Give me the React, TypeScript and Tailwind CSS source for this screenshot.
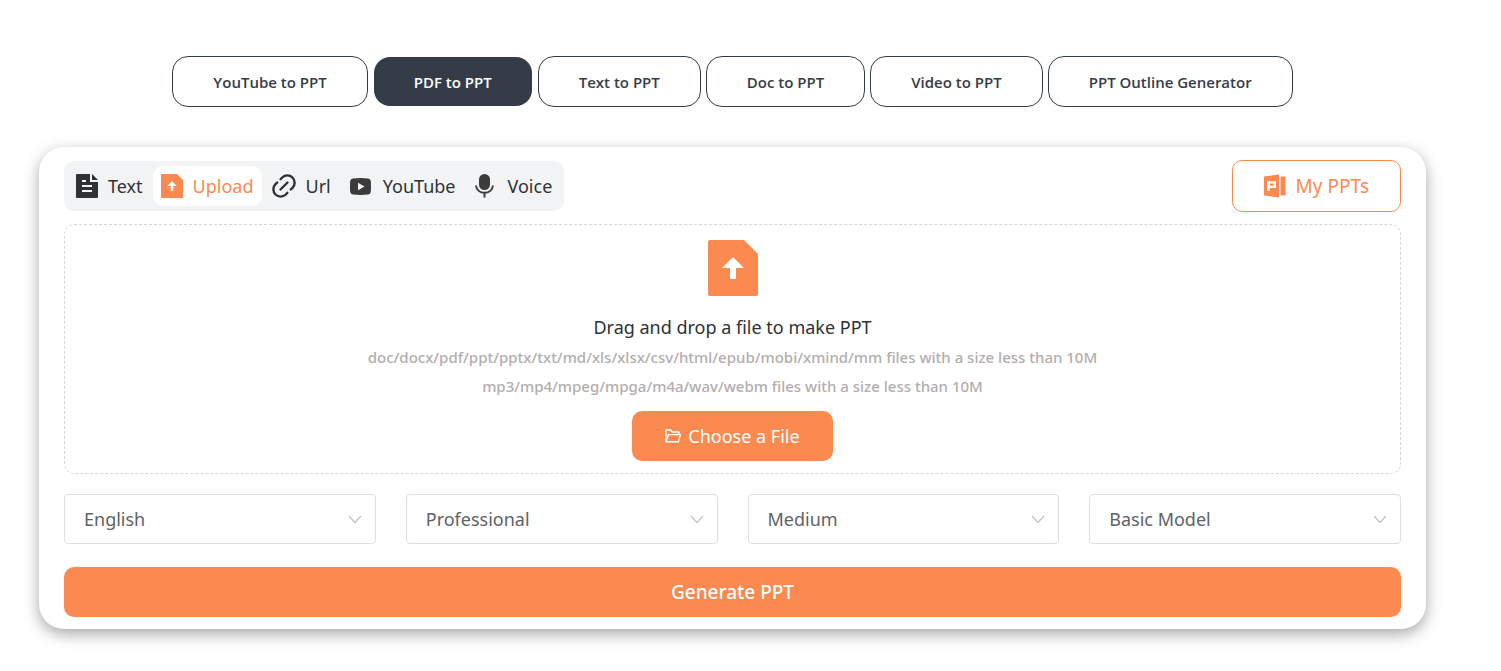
import React, { useState } from "react";
import clsx from "clsx";

const navItems = [
  "YouTube to PPT",
  "PDF to PPT",
  "Text to PPT",
  "Doc to PPT",
  "Video to PPT",
  "PPT Outline Generator",
];

const selects = [
  { label: "Language", options: ["English", "French", "Spanish"] },
  { label: "Tone", options: ["Professional", "Casual", "Creative"] },
  { label: "Length", options: ["Medium", "Short", "Long"] },
  { label: "Model", options: ["Basic Model", "Advanced Model"] },
];

const TextIcon = () => (
  <svg width="22" height="24" viewBox="0 0 22 24" aria-hidden="true">
    <path fill="#303133" d="M1 0h13v8h8v15a1 1 0 0 1-1 1H1a1 1 0 0 1-1-1V1a1 1 0 0 1 1-1z" />
    <path fill="#303133" d="M16 0l6 6h-6z" />
    <path stroke="#f2f3f5" strokeWidth="2" d="M6 7h4M6 12h10M6 17h10" />
  </svg>
);

const UploadIcon = ({ className }: { className: string }) => (
  <svg className={className} viewBox="0 0 50 56" preserveAspectRatio="none" aria-hidden="true">
    <path fill="#fb8a51" d="M2 0h34l14 14v40a2 2 0 0 1-2 2H2a2 2 0 0 1-2-2V2a2 2 0 0 1 2-2z" />
    <path fill="#fff" d="M25 17l11 11h-8v11h-6V28h-8z" />
  </svg>
);

const LinkIcon = () => (
  <svg width="24" height="24" viewBox="0 0 24 24" fill="none" stroke="#303133" strokeWidth="2.4" strokeLinecap="round" aria-hidden="true">
    <path d="M8.500 15.500l7-7" />
    <path d="M8.600 5.200l1.600-1.700a7 7 0 0 1 10.300 10.300l-1.700 1.600" />
    <path d="M5.200 8.600L3.500 10.200a7 7 0 0 0 10.300 10.300l1.600-1.700" />
  </svg>
);

const YouTubeIcon = () => (
  <svg width="24" height="17" viewBox="-1 0 24 17" aria-hidden="true">
    <path fill="#3b3b3b" d="M3 .4Q10.500-.4 18 .4q2.600.3 2.800 2.800.4 5.300 0 10.600-.2 2.500-2.800 2.800-7.500.8-15 0Q.4 16.300.2 13.800-.2 8.500.2 3.200.4.7 3 .4z" />
    <path fill="#f2f3f5" d="M8 4.800l6.500 3.700L8 12.200z" />
  </svg>
);

const MicIcon = () => (
  <svg width="24" height="24" viewBox="-1 0 24 24" aria-hidden="true">
    <rect x="4" y="0" width="11" height="16" rx="5.500" fill="#3b3b3b" />
    <path d="M1 11.500c.5 4.500 4 7.300 8.500 7.300s8-2.800 8.500-7.300M9.500 19v4.500" fill="none" stroke="#3b3b3b" strokeWidth="2" />
  </svg>
);

const PptIcon = () => (
  <svg width="22" height="24" viewBox="0 0 22 24" aria-hidden="true">
    <path fill="#fb8a51" d="M0 2.500L15 .5v23L0 21.500z" />
    <path fill="#fff" fillRule="evenodd" d="M3 7.300h9v6.700H6v2.700H3zM6 9.500v2.300h3.700V9.500z" />
    <path fill="#fb8a51" d="M16.500 2.500h4a1 1 0 0 1 1 1v17a1 1 0 0 1-1 1h-4z" />
  </svg>
);

const FolderIcon = () => (
  <svg width="16" height="14" viewBox="0 0 16 14" fill="none" stroke="#fff" strokeWidth="1.400" strokeLinejoin="round" aria-hidden="true">
    <path d="M1 12.800V1h4.500l1.700 2H14v2.500M1 12.800L3.600 5.600h11.700l-1.800 7.200z" />
  </svg>
);

const tabs = [
  { name: "Text", icon: <TextIcon /> },
  { name: "Upload", icon: <UploadIcon className="h-6 w-[22px]" /> },
  { name: "Url", icon: <LinkIcon /> },
  { name: "YouTube", icon: <YouTubeIcon /> },
  { name: "Voice", icon: <MicIcon /> },
];

const App = () => {
  const [tab, setTab] = useState("Upload");

  return (
    <div className="bg-white pt-14 pr-[75px] pb-10 pl-[39px] font-['Noto_Sans',sans-serif] text-[#303133]">
      <nav className="flex justify-center gap-[5px] font-['Open_Sans',sans-serif] text-[15px] font-semibold">
        {navItems.map((item) => (
          <a
            key={item}
            href="#"
            className={clsx(
              "flex items-center rounded-2xl px-10 pt-[2px] whitespace-nowrap",
              item === "PDF to PPT"
                ? "m-px h-[49px] bg-[#343d47] text-white"
                : "h-[51px] border border-[#343d47] text-[#343d47]"
            )}
          >
            {item}
          </a>
        ))}
      </nav>

      <main className="mt-10 rounded-[25px] bg-white px-[25px] pt-[13px] pb-3 shadow-[0_5px_15px_rgba(0,0,0,0.35)]">
        <div className="flex items-center justify-between">
          <div className="flex h-[50px] items-center gap-[2px] rounded-[10px] bg-[#f2f3f5] px-1">
            {tabs.map(({ name, icon }) => (
              <button
                key={name}
                type="button"
                onClick={() => setTab(name)}
                className={clsx(
                  "flex h-10 items-center gap-[10px] rounded-[10px] px-2 text-lg",
                  tab === name && "bg-white text-[#fb8a51]"
                )}
              >
                {icon}
                {name}
              </button>
            ))}
          </div>
          <button
            type="button"
            className="flex h-[52px] items-center gap-[10px] rounded-[10px] border border-[#fb8a51] px-[31px] text-[19px] text-[#fb8a51]"
          >
            <PptIcon />
            My PPTs
          </button>
        </div>

        <section className="mt-3 flex flex-col items-center rounded-[10px] border border-dashed border-[#d5d6d8] pt-[15px] pb-3">
          <UploadIcon className="h-14 w-[50px]" />
          <p className="mt-4 mb-px text-lg leading-[30px]">Drag and drop a file to make PPT</p>
          <p className="text-[15px] leading-[29px] font-medium text-[#b3adad]">
            doc/docx/pdf/ppt/pptx/txt/md/xls/xlsx/csv/html/epub/mobi/xmind/mm files with a size less than 10M
          </p>
          <p className="text-[15px] leading-[29px] font-medium text-[#b3adad]">
            mp3/mp4/mpeg/mpga/m4a/wav/webm files with a size less than 10M
          </p>
          <button
            type="button"
            className="mt-[10px] flex h-[50px] items-center gap-[7px] rounded-[10px] bg-[#fb8a51] px-[33px] text-lg text-white"
          >
            <FolderIcon />
            Choose a File
          </button>
        </section>

        <div className="mt-5 grid grid-cols-4 gap-[30px]">
          {selects.map(({ label, options }) => (
            <div key={label} className="relative">
              <select
                aria-label={label}
                className="h-[50px] w-full appearance-none rounded-[4px] border border-[#dcdfe6] bg-white px-[19px] text-lg text-[#606266]"
              >
                {options.map((o) => (
                  <option key={o}>{o}</option>
                ))}
              </select>
              <svg
                className="pointer-events-none absolute top-[21px] right-[14px]"
                width="14"
                height="9"
                viewBox="0 0 14 9"
                fill="none"
                stroke="#c0c4cc"
                strokeWidth="1.300"
                aria-hidden="true"
              >
                <path d="M1 1l6 6.500L13 1" />
              </svg>
            </div>
          ))}
        </div>

        <button type="button" className="mt-[23px] h-[50px] w-full rounded-[10px] bg-[#fb8a51] text-[19px] font-medium text-white">
          Generate PPT
        </button>
      </main>
    </div>
  );
};

export default App;
